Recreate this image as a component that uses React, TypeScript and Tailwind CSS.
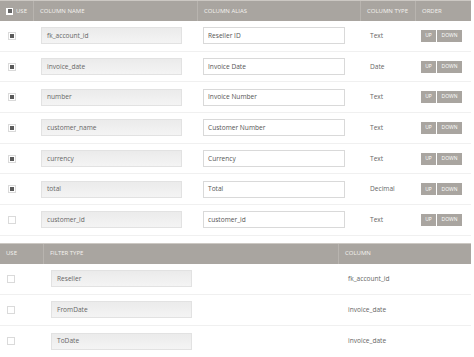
import React from "react";

type Col = { name: string; alias: string; type: string; used: boolean };

const columns: Col[] = [
  { name: "fk_account_id", alias: "Reseller ID", type: "Text", used: true },
  { name: "invoice_date", alias: "Invoice Date", type: "Date", used: true },
  { name: "number", alias: "Invoice Number", type: "Text", used: true },
  { name: "customer_name", alias: "Customer Number", type: "Text", used: true },
  { name: "currency", alias: "Currency", type: "Text", used: true },
  { name: "total", alias: "Total", type: "Decimal", used: true },
  { name: "customer_id", alias: "customer_id", type: "Text", used: false },
];

const filters = [
  { type: "Reseller", column: "fk_account_id" },
  { type: "FromDate", column: "invoice_date" },
  { type: "ToDate", column: "invoice_date" },
];

function Check({ on }: { on: boolean }) {
  return (
    <div className="w-[8px] h-[8px] border border-[#dadada] bg-white flex items-center justify-center">
      {on && <div className="w-[4px] h-[4px] bg-[#5a5a5a]" />}
    </div>
  );
}

function Field({ value, grey }: { value: string; grey?: boolean }) {
  return (
    <div
      className={
        grey
          ? "h-[17px] w-[141px] flex items-center px-[5px] border border-[#e2e2e2] bg-gradient-to-b from-[#ebebeb] to-[#f4f4f4] text-[#666]"
          : "h-[17px] w-[142px] flex items-center px-[4px] border border-[#d9d9d9] bg-white text-[#555]"
      }
    >
      {value}
    </div>
  );
}

const head =
  "h-full flex items-center px-[6px] text-[6px] uppercase whitespace-nowrap text-[#f4f2ef]";

export default function App() {
  return (
    <div
      className="w-[471px] bg-white text-[6.6px] text-[#555]"
      style={{ fontFamily: '"Open Sans", "Liberation Sans", sans-serif' }}
    >
      <div className="grid grid-cols-[33px_164px_163px_55px_56px] h-[21px] bg-[#a9a5a0] border-t border-[#ccc8c3]">
        <div className={head + " gap-[3px]"}>
          <div className="w-[7px] h-[7px] bg-white flex items-center justify-center">
            <div className="w-[4px] h-[4px] bg-[#666]" />
          </div>
          Use
        </div>
        <div className={head + " border-l border-[#b8b4af]"}>Column Name</div>
        <div className={head + " border-l border-[#b8b4af]"}>Column Alias</div>
        <div className={head + " border-l border-[#b8b4af]"}>Column Type</div>
        <div className={head + " border-l border-[#b8b4af]"}>Order</div>
      </div>
      {columns.map((c) => (
        <div
          key={c.name}
          className="grid grid-cols-[33px_164px_163px_55px_56px] h-[30.7px] items-center border-b border-[#f0f0f0]"
        >
          <div className="pl-[8px]">
            <Check on={c.used} />
          </div>
          <div className="pl-[8px]">
            <Field value={c.name} grey />
          </div>
          <div className="pl-[6px]">
            <Field value={c.alias} />
          </div>
          <div className="pl-[10px] text-[#666]">{c.type}</div>
          <div className="flex gap-[1px] pl-[6px]">
            <button className="h-[12px] w-[15px] bg-[#a9a5a0] text-white text-[5px] uppercase">Up</button>
            <button className="h-[12px] w-[25px] bg-[#a9a5a0] text-white text-[5px] uppercase">Down</button>
          </div>
        </div>
      ))}

      <div className="mt-[7px] grid grid-cols-[43px_295px_133px] h-[21px] bg-[#a9a5a0] border-t border-[#ccc8c3]">
        <div className={head}>Use</div>
        <div className={head + " border-l border-[#b8b4af]"}>Filter Type</div>
        <div className={head + " border-l border-[#b8b4af]"}>Column</div>
      </div>
      {filters.map((f) => (
        <div
          key={f.type}
          className="grid grid-cols-[43px_295px_133px] h-[31px] items-center border-b border-[#f0f0f0] last:border-b-0"
        >
          <div className="pl-[7px]">
            <Check on={false} />
          </div>
          <div className="pl-[8px]">
            <Field value={f.type} grey />
          </div>
          <div className="pl-[10px] text-[#666]">{f.column}</div>
        </div>
      ))}
    </div>
  );
}
